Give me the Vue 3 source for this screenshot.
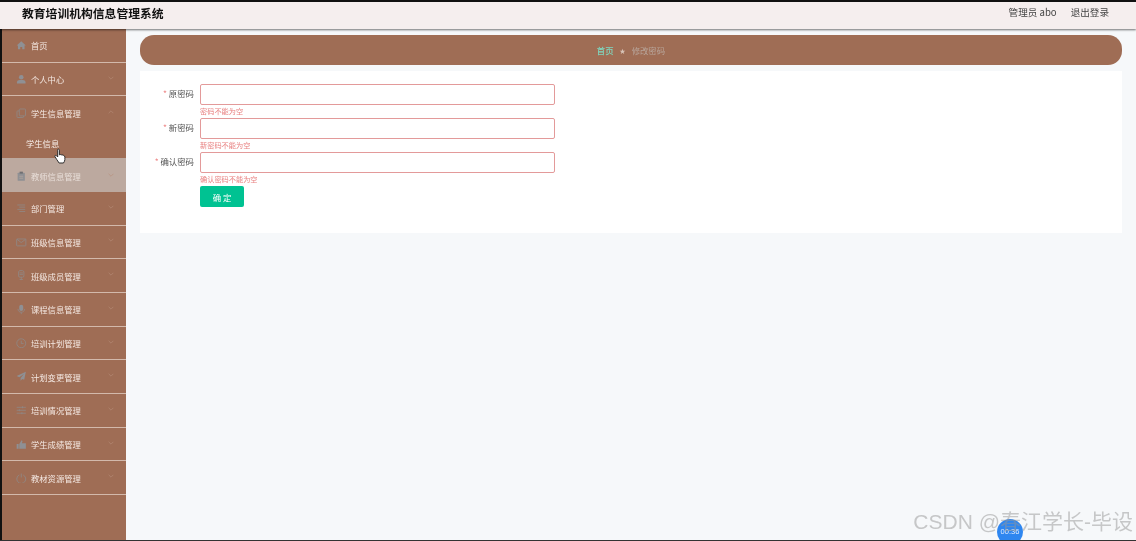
<script setup>
const menus = [
  { name: "首页", icon: "home", plain: true },
  { name: "个人中心", icon: "user" },
  { name: "学生信息管理", icon: "copy", open: true, children: ["学生信息"] },
  { name: "教师信息管理", icon: "clip", hover: true },
  { name: "部门管理", icon: "list" },
  { name: "班级信息管理", icon: "mail" },
  { name: "班级成员管理", icon: "phone" },
  { name: "课程信息管理", icon: "mic" },
  { name: "培训计划管理", icon: "clock" },
  { name: "计划变更管理", icon: "plane" },
  { name: "培训情况管理", icon: "sliders" },
  { name: "学生成绩管理", icon: "thumb" },
  { name: "教材资源管理", icon: "power" },
];

const fields = [
  { label: "原密码", error: "密码不能为空" },
  { label: "新密码", error: "新密码不能为空" },
  { label: "确认密码", error: "确认密码不能为空" },
];
</script>

<template>
  <div class="page">
    <header class="topbar">
      <div class="title">教育培训机构信息管理系统</div>
      <div class="top-right">
        <span>管理员 abo</span>
        <span>退出登录</span>
      </div>
    </header>

    <div class="body">
      <aside class="side">
        <template v-for="m in menus" :key="m.name">
          <div class="row" :class="{ hover: m.hover, open: m.open }">
            <svg class="ico" viewBox="0 0 16 16">
              <path v-if="m.icon === 'home'" class="fill" d="M8 2 1 8.500h2V14h3.500v-3.500h3V14H13V8.500h2z" />
              <g v-else-if="m.icon === 'user'" class="fill">
                <circle cx="8" cy="5" r="3.500" />
                <path d="M1.500 14.500v-2c0-2 2-3.200 4-3.200h5c2 0 4 1.200 4 3.200v2z" />
              </g>
              <g v-else-if="m.icon === 'copy'" class="line">
                <rect x="5" y="1.500" width="9.500" height="10.500" rx="1" />
                <path d="M5 4.500H2.500a1 1 0 0 0-1 1v8a1 1 0 0 0 1 1h8a1 1 0 0 0 1-1V12" />
              </g>
              <g v-else-if="m.icon === 'clip'">
                <rect class="fill" x="2.500" y="2.500" width="11" height="12.500" rx="1" />
                <rect class="clip-top" x="5.500" y="1" width="5" height="3" />
                <path class="clip-lines" d="M5 8h6M5 11h6" />
              </g>
              <path v-else-if="m.icon === 'list'" class="line" d="M2 3h12M5 6.300h9M2 9.700h12M5 13h9" />
              <g v-else-if="m.icon === 'mail'" class="line">
                <rect x="1" y="3" width="14" height="10.500" rx="0.500" />
                <path d="m1.500 3.500 6.500 5 6.500-5" />
              </g>
              <g v-else-if="m.icon === 'phone'" class="line">
                <rect x="4" y="1" width="8" height="10" rx="2" />
                <path d="M5.500 4.500h5M5.500 7h5M8 11v3M5.500 14.500h5" />
              </g>
              <g v-else-if="m.icon === 'mic'">
                <rect class="fill" x="5" y="1" width="6" height="9.500" rx="3" />
                <path class="line" d="M3 7.500c0 3 2 5 5 5s5-2 5-5M8 12.500v3" />
              </g>
              <g v-else-if="m.icon === 'clock'" class="line">
                <circle cx="8" cy="8" r="6.800" />
                <path d="M8 4v4.500h3.500" />
              </g>
              <path v-else-if="m.icon === 'plane'" class="fill" d="M15 1 1 7.500l4 2 7-5-5 6v4.500l2.500-3 3 1.500z" />
              <path v-else-if="m.icon === 'sliders'" class="line" d="M1 3.500h14M1 8h14M1 12.500h14M10 2v3M5 6.500v3M9 11v3" />
              <path v-else-if="m.icon === 'thumb'" class="fill" d="M1 7.500h3V15H1zM5 7.500 8.500 2l1.500 1-1 3.500h6V15H5z" />
              <g v-else-if="m.icon === 'power'" class="line">
                <path d="M5 3a6.800 6.800 0 1 0 6 0M8 .8v6" />
              </g>
            </svg>
            <span class="name">{{ m.name }}</span>
            <svg v-if="!m.plain" class="arrow" viewBox="0 0 10 6">
              <path :d="m.open ? 'M1 5l4-4 4 4' : 'M1 1l4 4 4-4'" />
            </svg>
          </div>
          <div v-for="c in m.children" :key="c" class="sub">{{ c }}</div>
        </template>
        <!-- 鼠标指针 -->
        <svg class="cursor" viewBox="0 0 14 18">
          <path d="M4 1.500c.8-.8 1.800-.3 1.800.7v5l1-.3 1 .3 1.200.1 1.300.5c1 .4 1.400 1 1.400 2v2.500c0 1.500-.8 2.500-1.500 3.700H5.500L2.800 12 1 9c-.4-1 .7-1.600 1.500-1L4 9.500V2.300z" />
        </svg>
      </aside>

      <main class="main">
        <div class="crumb">
          <span class="home-link">首页</span>
          <span class="sep">★</span>
          <span class="cur">修改密码</span>
        </div>
        <div class="card">
          <div v-for="f in fields" :key="f.label" class="item">
            <label class="label"><i>*</i> {{ f.label }}</label>
            <div class="ctrl">
              <div class="input"></div>
              <div class="err">{{ f.error }}</div>
            </div>
          </div>
          <button class="btn">确 定</button>
        </div>
      </main>
    </div>

    <div class="badge">00:36</div>
    <div class="mark">CSDN @春江学长-毕设</div>
  </div>
</template>

<style>
html,
body {
  margin: 0;
  overflow: hidden;
}
</style>

<style scoped>
.page {
  position: relative;
  width: 1136px;
  height: 541px;
  box-sizing: border-box;
  border-top: 2px solid #111;
  border-bottom: 1px solid #333;
  display: flex;
  flex-direction: column;
  overflow: hidden;
  background: #f6f8fa;
  font-family: "Noto Sans CJK SC", "Liberation Sans", sans-serif;
  filter: blur(0.4px);
}

/* TOP */
.topbar {
  height: 27px;
  flex: none;
  display: flex;
  align-items: center;
  justify-content: space-between;
  padding: 0 27px 7px 22px;
  box-sizing: border-box;
  background: #f5eeee;
  box-shadow: 0 1px 2px rgba(0, 0, 0, 0.55);
  position: relative;
  z-index: 2;
}
.title {
  font-size: 11.800px;
  font-weight: 700;
  color: #111;
}
.top-right {
  display: flex;
  gap: 14px;
  font-size: 9.600px;
  color: #444;
}

.body {
  flex: 1;
  display: flex;
  min-height: 0;
}

/* SIDE */
.side {
  position: relative;
  width: 126px;
  flex: none;
  box-sizing: border-box;
  border-left: 2px solid #111;
  background: #9f6d55;
}
.row {
  height: 33.700px;
  box-sizing: border-box;
  display: flex;
  align-items: center;
  padding-left: 14px;
  border-bottom: 1px solid #d3b9ab;
  font-size: 8.300px;
  color: #f4e8e2;
}
.row.open {
  border-bottom: none;
}
.row.hover {
  background: #bca99f;
  border-bottom: none;
  padding-top: 2px;
  color: #e8ded8;
}
.ico {
  width: 10.500px;
  height: 10.500px;
  flex: none;
  margin-right: 4.500px;
}
.fill {
  fill: #8f9094;
}
.line {
  fill: none;
  stroke: #8f8a88;
  stroke-width: 1.200;
}
.clip-top {
  fill: #6f6f72;
}
.clip-lines {
  stroke: #bca99f;
  stroke-width: 1;
}
.name {
  flex: 1;
}
.arrow {
  width: 6px;
  height: 4px;
  margin-right: 12px;
  margin-top: -3px;
  fill: none;
  stroke: #b88f7b;
  stroke-width: 1;
}
.sub {
  height: 28.200px;
  box-sizing: border-box;
  padding: 0 0 2px 24px;
  display: flex;
  align-items: center;
  font-size: 8.300px;
  color: #f7eee9;
}
.cursor {
  position: absolute;
  left: 52px;
  top: 119px;
  width: 13px;
  height: 17px;
  fill: #fff;
  stroke: #222;
  stroke-width: 1;
}

/* MAIN */
.main {
  flex: 1;
  min-width: 0;
  padding: 6px 14px 0;
}
.crumb {
  height: 30px;
  border-radius: 14px;
  background: #9f6d55;
  display: flex;
  align-items: center;
  justify-content: center;
  gap: 6px;
  font-size: 8.400px;
}
.home-link {
  color: #7fd8c0;
  font-weight: 500;
}
.sep {
  color: #d8c4b8;
  font-size: 6px;
}
.cur {
  color: #b8a59b;
}
.card {
  margin-top: 6px;
  height: 162px;
  box-sizing: border-box;
  background: #fff;
  padding: 13px 0 0 60px;
}
.item {
  display: flex;
  height: 34px;
}
.label {
  position: absolute;
  width: 54px;
  margin-left: -60px;
  height: 21px;
  line-height: 19px;
  text-align: right;
  font-size: 8.400px;
  color: #555;
}
.label i {
  color: #ee8a8a;
  font-style: normal;
}
.ctrl {
  width: 355px;
}
.input {
  height: 21px;
  box-sizing: border-box;
  border: 1px solid #e39a9a;
  border-radius: 2px;
  background: #fff;
}
.err {
  height: 13px;
  line-height: 12px;
  font-size: 7.200px;
  color: #e88080;
}
.btn {
  display: block;
  width: 44px;
  height: 21px;
  padding: 0;
  border: none;
  border-radius: 2px;
  background: #00c292;
  color: #fff;
  font-family: inherit;
  font-size: 8.400px;
}

/* 水印 */
.badge {
  position: absolute;
  left: 997px;
  top: 517px;
  width: 26px;
  height: 26px;
  border-radius: 50%;
  background: #2e86f0;
  color: #dcebff;
  font-family: "Liberation Sans", sans-serif;
  font-size: 7.500px;
  line-height: 26px;
  text-align: center;
}
.mark {
  position: absolute;
  right: 3px;
  top: 507px;
  font-family: "Liberation Sans", "Noto Sans CJK SC", sans-serif;
  font-size: 21px;
  line-height: 26px;
  color: rgba(150, 150, 150, 0.5);
  white-space: nowrap;
}
</style>
